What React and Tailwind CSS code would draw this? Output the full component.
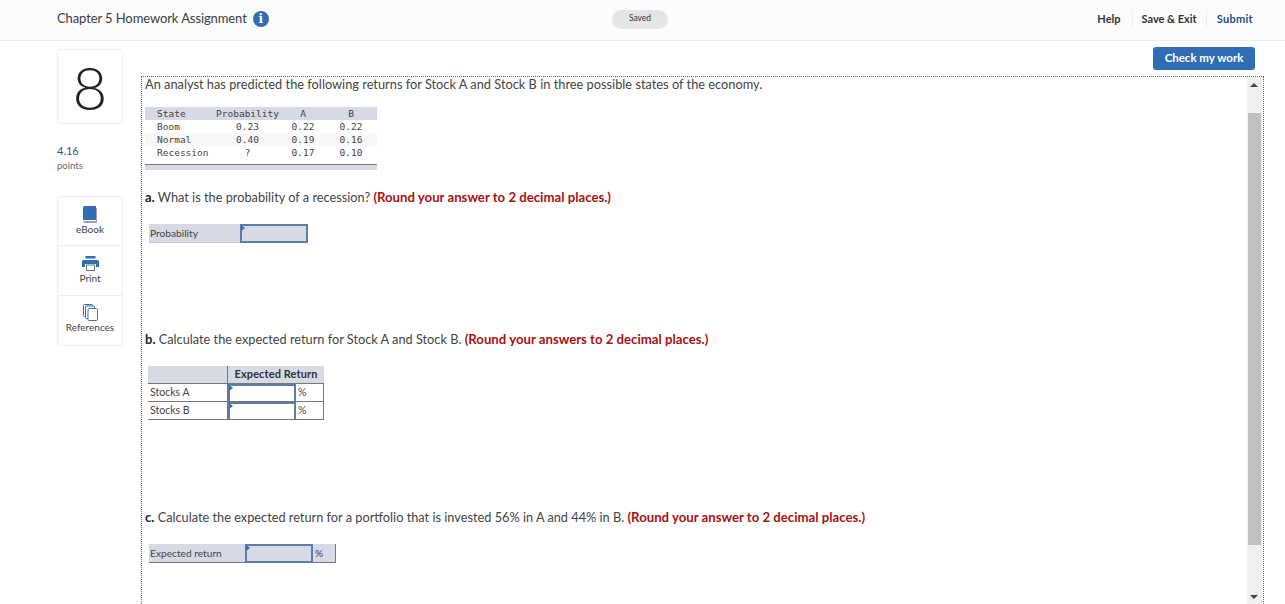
import React from 'react';

const mono = "font-['DejaVu_Sans_Mono',monospace] text-[9.5px] leading-[13px] text-[#444]";

const stockRows = [
    { state: 'Boom', p: '0.23', a: '0.22', b: '0.22' },
    { state: 'Normal', p: '0.40', a: '0.19', b: '0.16', shaded: true },
    { state: 'Recession', p: '?', a: '0.17', b: '0.10' },
];

const AnswerInput = ({ className }) => (
    <div className={`relative border-2 border-[#5b7da8] ${className}`}>
        <span className="absolute left-[-1px] top-[-1px] w-0 h-0 border-y-[3px] border-y-transparent border-l-[4px] border-l-[#2f6db5]" />
    </div>
);

const Grid = ({ children, className }) => (
    <div className={`grid grid-cols-[69px_67px_44px_52px] ${mono} ${className}`}>{children}</div>
);

const BookIcon = () => (
    <svg width="16" height="17" viewBox="0 0 16 17">
        <path d="M1 1.5A1.5 1.5 0 0 1 2.5 0H14v14H1z" fill="#2f6db5" />
        <path d="M15 2v15H3a2 2 0 0 1-2-2h13V2z" fill="#9aa4ae" />
    </svg>
);

const PrintIcon = () => (
    <svg width="17" height="15" viewBox="0 0 17 15">
        <rect x="3.5" y="0" width="10" height="2.5" fill="#2f6db5" />
        <path d="M1.5 4h14A1.5 1.5 0 0 1 17 5.500V11h-3V8H3v3H0V5.500A1.500 1.500 0 0 1 1.500 4z" fill="#2f6db5" />
        <rect x="4.500" y="9" width="8" height="5.500" fill="#fff" stroke="#6b7280" />
    </svg>
);

const RefIcon = () => (
    <svg width="15" height="17" viewBox="0 0 15 17" fill="#fff" stroke="#2f6db5" strokeWidth="1">
        <rect x="0.500" y="0.500" width="9" height="12" rx="1" />
        <rect x="2.500" y="2" width="9" height="12.500" rx="1" />
        <rect x="5" y="4.500" width="9.500" height="12" rx="1" stroke="#5f6f80" />
    </svg>
);

const ToolButton = ({ icon, label, className }) => (
    <div className={`flex flex-col items-center justify-start ${className}`}>
        <div className="h-[17px] flex items-center">{icon}</div>
        <div className="text-[10px] leading-[12px] text-[#444]">{label}</div>
    </div>
);

const Question = ({ letter, text, note, className }) => (
    <p className={`text-[12.75px] leading-[16px] text-[#444] ${className}`}>
        <b className="text-[#222] text-[13px]">{letter}</b> {text} <b className="text-[#a81212] text-[13.2px]">{note}</b>
    </p>
);

const App = () => {
    return (
        <div className="h-[604px] w-[1285px] overflow-hidden bg-white font-['Lato',sans-serif] flex flex-col">
            <header className="h-[41px] shrink-0 bg-[#fcfcfc] border-b border-[#ececec] flex items-center pl-[57px] pr-[32px] pb-[3px] relative">
                <span className="text-[13px] tracking-[-0.1px] text-[#3d3d3d]">Chapter 5 Homework Assignment</span>
                <span className="ml-[6px] w-4 h-4 rounded-full bg-[#2f6db5] text-white text-[12px] leading-4 font-bold text-center font-['DejaVu_Serif',serif]">i</span>
                <div className="absolute left-[612px] top-[10px] w-[56px] h-[19px] rounded-full bg-[#e5e5e7] text-[8.500px] leading-[17px] text-center text-[#333]">Saved</div>
                <nav className="ml-auto flex items-center text-[11px] font-bold">
                    <span className="text-[#333] pr-[11px] border-r border-[#eee] leading-[18px]">Help</span>
                    <span className="text-[#333] pl-[9px] pr-[9px] border-r border-[#eee] leading-[18px]">Save &amp; Exit</span>
                    <span className="text-[#1f4e86] pl-[10px] tracking-[0.3px] leading-[18px]">Submit</span>
                </nav>
            </header>

            <main className="flex flex-1 min-h-0 pl-[57px]">
                <aside className="w-[66px] shrink-0 pt-[8px]">
                    <div className="h-[75px] rounded-[4px] border border-[#eee] flex items-center justify-center text-[60px] font-light leading-none text-[#222]">8</div>
                    <div className="mt-[20px] text-[11px] leading-[14px] text-[#2a5a8f]">4.16</div>
                    <div className="text-[9.500px] leading-[15px] text-[#666]">points</div>
                    <div className="mt-[23px] h-[150px] rounded-[4px] border border-[#eee] flex flex-col">
                        <ToolButton icon={<BookIcon />} label="eBook" className="h-[49px] pt-[9px] border-b border-[#eee]" />
                        <ToolButton icon={<PrintIcon />} label="Print" className="h-[50px] pt-[9px] border-b border-[#eee]" />
                        <ToolButton icon={<RefIcon />} label="References" className="flex-1 pt-[8px]" />
                    </div>
                </aside>

                <section className="w-[1123px] ml-[18px] flex flex-col shrink-0">
                    <div className="h-[35px] shrink-0 flex justify-end items-start pt-[6px] pr-[9px]">
                        <button className="w-[102px] h-[23px] pb-[2px] rounded-[3px] bg-[#2f6db5] text-white text-[11.5px] font-bold">Check my work</button>
                    </div>
                    <div className="flex-1 border-t border-l border-r border-dotted border-[#3d6a96] flex min-h-0">
                        <div className="flex-1 pl-[3px]">
                            <p className="text-[12.8px] leading-[16px] text-[#444] mt-[-1px]">An analyst has predicted the following returns for Stock A and Stock B in three possible states of the economy.</p>

                            <div className="w-[232px] mt-[15px]">
                                <Grid className="bg-[#d5dae5] h-[13px] items-center">
                                    <span className="pl-[12px]">State</span>
                                    <span className="text-center">Probability</span>
                                    <span className="text-center">A</span>
                                    <span className="text-center">B</span>
                                </Grid>
                                {stockRows.map((r) => (
                                    <Grid key={r.state} className={r.shaded ? 'bg-[#f8f8f8]' : ''}>
                                        <span className="pl-[12px]">{r.state}</span>
                                        <span className="text-center">{r.p}</span>
                                        <span className="text-center">{r.a}</span>
                                        <span className="text-center">{r.b}</span>
                                    </Grid>
                                ))}
                                <div className="h-[6px] mt-[5px] bg-[#d5dae5] border-t border-[#777]" />
                            </div>

                            <Question letter="a." text="What is the probability of a recession?" note="(Round your answer to 2 decimal places.)" className="mt-[19px]" />

                            <div className="flex w-[159px] h-[19px] ml-[4px] mt-[19px] bg-[#d5dae5] text-[10.2px] text-[#444]">
                                <div className="w-[91px] pl-[1px] border-b border-[#c4c9d4] leading-[19px]">Probability</div>
                                <AnswerInput className="flex-1" />
                            </div>

                            <Question letter="b." text="Calculate the expected return for Stock A and Stock B." note="(Round your answers to 2 decimal places.)" className="mt-[88px]" />

                            <div className="w-[176px] ml-[3px] mt-[19px] text-[10.500px] text-[#444]">
                                <div className="grid grid-cols-[80px_96px] h-[18px] border-b border-[#777]">
                                    <div className="bg-[#d5dae5] border-r border-[#777]" />
                                    <div className="bg-[#d5dae5] text-center text-[11px] font-bold leading-[16px] tracking-[0.1px] text-[#333]">Expected Return</div>
                                </div>
                                {['Stocks A', 'Stocks B'].map((s) => (
                                    <div key={s} className="grid grid-cols-[80px_68px_28px] h-[18px] border-b border-[#777]">
                                        <div className="pl-[2px] leading-[17px] border-r border-[#777]">{s}</div>
                                        <AnswerInput className="bg-white border-b-0" />
                                        <div className="pl-[2px] leading-[17px] border-r border-[#777]">%</div>
                                    </div>
                                ))}
                            </div>

                            <Question letter="c." text="Calculate the expected return for a portfolio that is invested 56% in A and 44% in B." note="(Round your answer to 2 decimal places.)" className="mt-[89px]" />

                            <div className="grid grid-cols-[96px_68px_23px] w-[187px] h-[19px] ml-[4px] mt-[19px] bg-[#d5dae5] text-[10.2px] text-[#444] border-b border-[#777]">
                                <div className="pl-[1px] leading-[18px]">Expected return</div>
                                <AnswerInput className="h-[19px]" />
                                <div className="pl-[2px] leading-[18px] border-r border-[#777]">%</div>
                            </div>
                        </div>

                        <div className="w-[15px] shrink-0 mr-[1px] bg-[#f1f0f0] flex flex-col relative">
                            <span className="absolute left-[3px] top-[6px] w-0 h-0 border-x-[4px] border-x-transparent border-b-[4px] border-b-[#444]" />
                            <div className="h-[432px] mt-[36px] mx-[1px] bg-[#c1c1c1]" />
                            <span className="absolute left-[3px] bottom-[5px] w-0 h-0 border-x-[4px] border-x-transparent border-t-[4px] border-t-[#444]" />
                        </div>
                    </div>
                </section>
            </main>
        </div>
    );
};

export default App;
